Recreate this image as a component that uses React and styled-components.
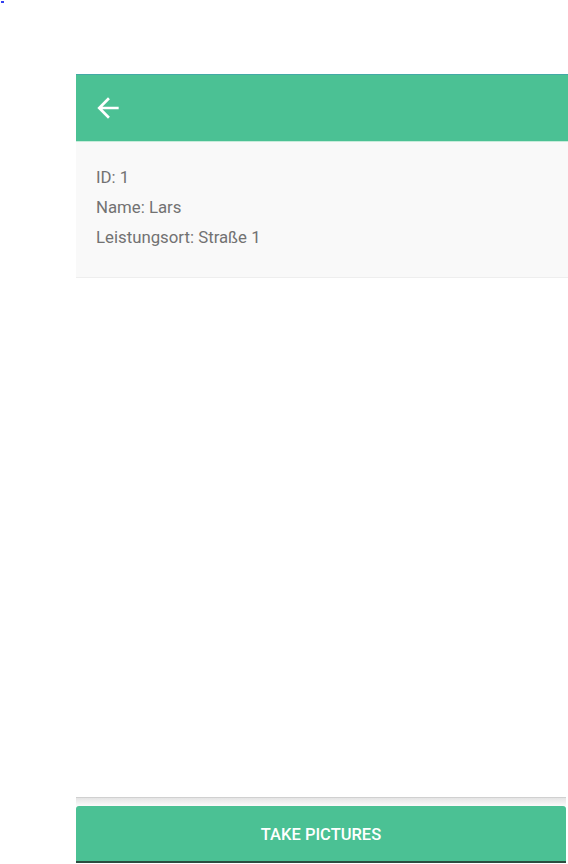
import React from "react";
import styled, { createGlobalStyle } from "styled-components";

const Global = createGlobalStyle`
  html, body { margin: 0; padding: 0; background: #ffffff; }
  body { font-family: Roboto, "Liberation Sans", Arial, sans-serif; overflow: hidden; }
  #root { width: 568px; height: 864px; }
`;

const Page = styled.div`
  width: 568px;
  height: 864px;
  display: flex;
  flex-direction: column;
  background: #ffffff;
`;

const MarkerRow = styled.div`
  height: 3px;
  flex: none;
  overflow: hidden;
  display: flex;
  align-items: flex-start;
  padding: 1px 0 0 1px;
  box-sizing: border-box;
`;

const Marker = styled.span`
  display: block;
  width: 3px;
  height: 2px;
  background: #3340f0;
`;

const Screen = styled.div`
  flex: 1;
  display: flex;
  flex-direction: column;
  margin: 71px 0 0 76px;
  min-height: 0;
`;

const Header = styled.header`
  height: 66px;
  flex: none;
  background: #4bc194;
  border-top: 1px solid #44a9a6;
  border-bottom: 1px solid #c6ecda;
  display: flex;
  align-items: center;
  padding-left: 16px;
`;

const BackButton = styled.button`
  background: none;
  border: none;
  padding: 0;
  width: 32px;
  height: 32px;
  display: flex;
  align-items: center;
  justify-content: center;
  cursor: pointer;
`;

const InfoPanel = styled.section`
  background: #f9f9f9;
  padding: 20px 20px 25px;
  border-bottom: 1px solid #eeeeee;
  flex: none;
`;

const InfoLine = styled.div`
  font-size: 16.8px;
  line-height: 30px;
  color: #727272;
`;

const Spacer = styled.div`
  flex: 1;
`;

const Divider = styled.div`
  height: 8px;
  margin-right: 2px;
  border-top: 1px solid #d0d0d0;
  background: linear-gradient(#e4e4e4, #fbfbfb);
  flex: none;
`;

const ActionButton = styled.button`
  height: 57px;
  margin: 0 2px 1px 0;
  background: #4bc194;
  border: none;
  border-bottom: 2px solid #2c4d40;
  border-radius: 3px 3px 0 0;
  color: #ffffff;
  font-family: Roboto, "Liberation Sans", Arial, sans-serif;
  font-size: 16.5px;
  font-weight: 500;
  text-transform: uppercase;
  cursor: pointer;
  flex: none;
  padding-top: 2px;
`;

const ArrowBack = () => (
  <svg width="32" height="32" viewBox="0 0 24 24" fill="#ffffff">
    <path d="M20 11H7.83l5.59-5.59L12 4l-8 8 8 8 1.41-1.41L7.83 13H20v-2z" />
  </svg>
);

export default function App() {
  const info = [
    { label: "ID", value: "1" },
    { label: "Name", value: "Lars" },
    { label: "Leistungsort", value: "Straße 1" },
  ];
  return (
    <>
      <Global />
      <Page>
        <MarkerRow>
          <Marker />
        </MarkerRow>
        <Screen>
          <Header>
            <BackButton aria-label="Zurück">
              <ArrowBack />
            </BackButton>
          </Header>
          <InfoPanel>
            {info.map((i) => (
              <InfoLine key={i.label}>
                {i.label}: {i.value}
              </InfoLine>
            ))}
          </InfoPanel>
          <Spacer />
          <Divider />
          <ActionButton>Take Pictures</ActionButton>
        </Screen>
      </Page>
    </>
  );
}
